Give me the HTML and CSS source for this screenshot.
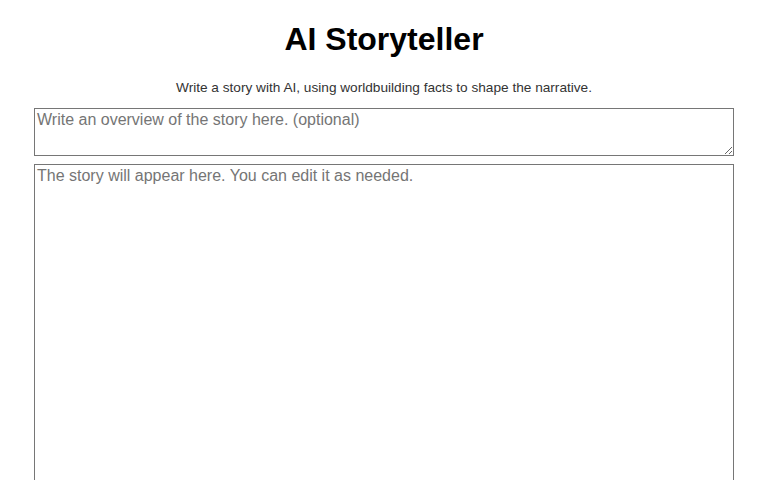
FILE: index.html
```html
<!DOCTYPE html>
<html lang="en">
<head>
<meta charset="utf-8">
<title>AI Storyteller</title>
<link rel="stylesheet" href="styles.css">
</head>
<body>
<main class="app">
  <h1 class="title">AI Storyteller</h1>
  <p class="subtitle">Write a story with AI, using worldbuilding facts to shape the narrative.</p>
  <textarea class="overview" placeholder="Write an overview of the story here. (optional)"></textarea>
  <textarea class="story" placeholder="The story will appear here. You can edit it as needed."></textarea>
</main>
</body>
</html>
```

FILE: styles.css
```css
html, body {
  margin: 0;
  padding: 0;
  background: #fff;
}

body {
  font-family: "Liberation Sans", Arial, sans-serif;
  color: #000;
}

.app {
  width: 700px;
  margin: 0 auto;
  display: flex;
  flex-direction: column;
}

.title {
  margin: 21px 0 0;
  font-size: 32px;
  line-height: 37px;
  font-weight: bold;
  text-align: center;
}

.subtitle {
  margin: 22px 0 12px;
  font-size: 13.65px;
  line-height: 16px;
  color: #333;
  text-align: center;
}

textarea {
  box-sizing: border-box;
  width: 700px;
  margin: 0;
  padding: 2px;
  border: 1px solid #767676;
  font-family: "Liberation Sans", Arial, sans-serif;
  font-size: 16px;
  line-height: 18px;
  color: #000;
  background: #fff;
}

textarea::placeholder {
  color: #757575;
}

.overview {
  height: 48px;
}

.story {
  margin-top: 8px;
  height: 400px;
  resize: none;
}
```
